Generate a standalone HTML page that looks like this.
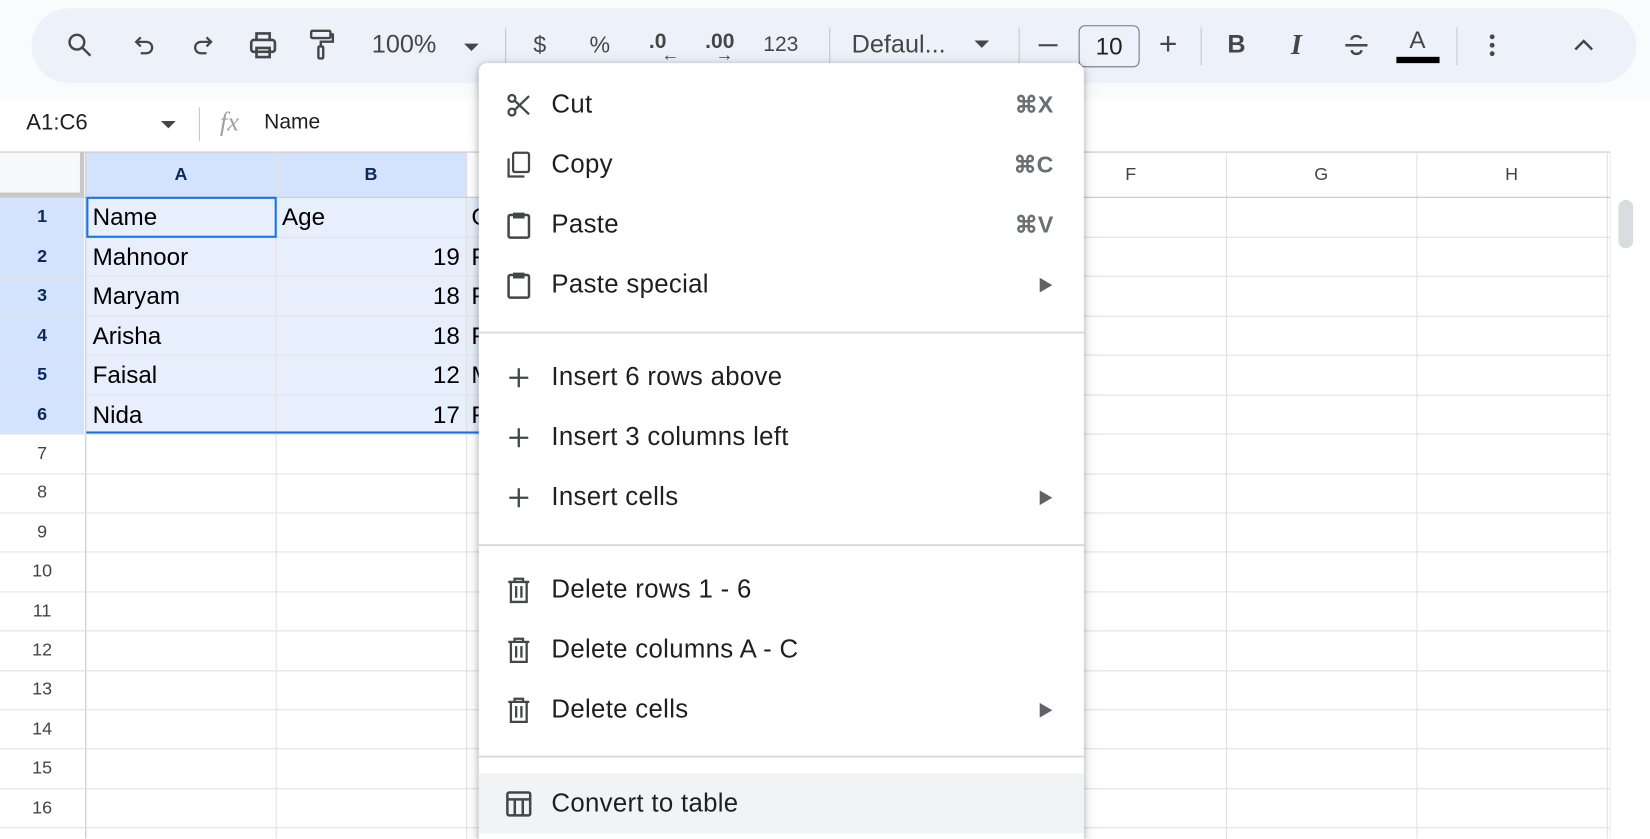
<!DOCTYPE html>
<html><head><meta charset="utf-8">
<style>
*{box-sizing:border-box;margin:0;padding:0}
html,body{width:1650px;height:838px;overflow:hidden;background:#fff}
#wrap{position:absolute;left:0;top:0;width:1568px;height:797px;overflow:hidden;transform:scale(1.05230);transform-origin:0 0;font-family:"Liberation Sans",Arial,sans-serif;color:#1f1f1f;background:#f9fbfd}
.abs{position:absolute}
.pill{left:30px;top:8px;width:1525px;height:71px;background:#edf2fa;border-radius:36px}
.tb{position:absolute;top:43px;transform:translate(-50%,-50%);color:#444746;font-size:22px;white-space:nowrap}
.sep{position:absolute;top:26px;width:1px;height:36px;background:#c4c7c5}
svg{display:block}
.fbar{left:0;top:94px;width:1568px;height:50px;background:#fff}
.grid{left:0;top:144px;width:1530px;height:653px;background:#fff}
.vl{position:absolute;top:144px;width:1px;height:653px;background:#e1e1e1}
.hl{position:absolute;left:0;height:1px;width:1530px;background:#e1e1e1}
.rn{position:absolute;left:0;width:80px;text-align:center;font-size:17px;color:#444;}
.ch{position:absolute;top:145px;height:42px;line-height:42px;text-align:center;font-size:17px;color:#444}
.cell{position:absolute;font-size:23px;color:#000;}
.menu{left:455px;top:60px;width:575px;height:760px;background:#fff;border-radius:8px;box-shadow:0 2px 6px rgba(0,0,0,.25),0 1px 14px rgba(0,0,0,.12)}
.mi{position:absolute;left:0;width:575px;height:50px}
.mi .t{position:absolute;left:69px;top:50%;transform:translateY(-50%);font-size:24.5px;color:#1f1f1f;letter-spacing:.3px}
.mi .ic{position:absolute;left:25px;top:50%;transform:translateY(-50%)}
.mi .k{position:absolute;right:29px;top:50%;transform:translateY(-50%);font-size:22px;color:#6b6f73;font-weight:bold}
.mi .ar{position:absolute;right:30px;top:50%;transform:translateY(-50%);width:0;height:0;border-left:12px solid #5f6368;border-top:7px solid transparent;border-bottom:7px solid transparent}
.msep{position:absolute;left:0;width:575px;height:2px;background:#dadce0}
</style></head><body><div id="wrap">

<div class="abs pill"></div>
<div class="tb" style="left:76px"><svg width="28" height="28" viewBox="0 0 24 24" fill="none" stroke="#444746" stroke-width="2"><circle cx="9.5" cy="9.5" r="6"/><path d="M14 14l6.5 6.5"/></svg></div>
<div class="tb" style="left:137px"><svg width="26" height="26" viewBox="0 0 24 24" fill="none" stroke="#444746" stroke-width="2"><path d="M9 5L5 9l4 4"/><path d="M5 9h9a5 5 0 010 10H9"/></svg></div>
<div class="tb" style="left:193px"><svg width="26" height="26" viewBox="0 0 24 24" fill="none" stroke="#444746" stroke-width="2"><path d="M15 5l4 4-4 4"/><path d="M19 9h-9a5 5 0 000 10h5"/></svg></div>
<div class="tb" style="left:250px"><svg width="30" height="30" viewBox="0 0 24 24" fill="none" stroke="#444746" stroke-width="2"><path d="M7 8V3h10v5"/><rect x="3" y="8" width="18" height="9" rx="2"/><path d="M7 14h10v7H7z"/></svg></div>
<div class="tb" style="left:306px"><svg width="28" height="32" viewBox="0 0 24 28" fill="none" stroke="#444746" stroke-width="2"><rect x="3" y="2" width="16" height="6" rx="1"/><path d="M19 5h2v6h-10v4"/><rect x="9" y="15" width="4" height="10" rx="1"/></svg></div>
<div class="tb" style="left:384px;font-size:24px">100%</div>
<div class="tb" style="left:448px;top:45px;width:0;height:0;border-top:7px solid #444746;border-left:7px solid transparent;border-right:7px solid transparent"></div>
<div class="sep" style="left:480px"></div>
<div class="tb" style="left:513px">$</div>
<div class="tb" style="left:570px">%</div>
<div class="tb" style="left:625px;top:40px;font-size:20px;font-weight:bold">.0<span style="position:absolute;left:12px;top:14px;font-size:17px">←</span></div>
<div class="tb" style="left:684px;top:40px;font-size:20px;font-weight:bold">.00<span style="position:absolute;left:10px;top:14px;font-size:17px">→</span></div>
<div class="tb" style="left:742px;font-size:20px">123</div>
<div class="sep" style="left:788px"></div>
<div class="tb" style="left:854px;font-size:24px">Defaul...</div>
<div class="tb" style="left:933px;top:42px;width:0;height:0;border-top:7px solid #444746;border-left:7px solid transparent;border-right:7px solid transparent"></div>
<div class="sep" style="left:968px"></div>
<div class="tb" style="left:996px;width:18px;height:2px;background:#444746"></div>
<div class="abs" style="left:1025px;top:24px;width:58px;height:40px;border:1.5px solid #747775;border-radius:6px;font-size:23px;text-align:center;line-height:38px;color:#1f1f1f">10</div>
<div class="tb" style="left:1110px;font-size:30px;font-weight:300">+</div>
<div class="sep" style="left:1141px"></div>
<div class="tb" style="left:1175px;font-weight:bold;font-size:24px">B</div>
<div class="tb" style="left:1232px;font-style:italic;font-family:'Liberation Serif',serif;font-size:27px;font-weight:bold">I</div>
<div class="tb" style="left:1289px"><svg width="28" height="28" viewBox="0 0 24 24" fill="none" stroke="#444746" stroke-width="2"><path d="M3 12h18"/><path d="M16 6.5c-1-1.5-2.5-2-4-2-2 0-4 1-4 3"/><path d="M8 16c.5 2 2 3 4 3s4-1 4-3"/></svg></div>
<div class="tb" style="left:1347px;top:38px;font-size:23px">A</div>
<div class="abs" style="left:1327px;top:54px;width:41px;height:6px;background:#000"></div>
<div class="sep" style="left:1384px"></div>
<div class="tb" style="left:1418px"><svg width="8" height="24" viewBox="0 0 8 24" fill="#444746"><circle cx="4" cy="4" r="2.3"/><circle cx="4" cy="12" r="2.3"/><circle cx="4" cy="20" r="2.3"/></svg></div>
<div class="tb" style="left:1505px"><svg width="22" height="14" viewBox="0 0 22 14" fill="none" stroke="#444746" stroke-width="2.4"><path d="M3 11l8-8 8 8"/></svg></div>

<div class="abs fbar"></div>
<div class="abs" style="left:25px;top:105px;font-size:21px;color:#1f1f1f">A1:C6</div>
<div class="abs" style="left:153px;top:115px;width:0;height:0;border-top:7px solid #444746;border-left:7px solid transparent;border-right:7px solid transparent"></div>
<div class="abs" style="left:189px;top:102px;width:1px;height:32px;background:#c4c7c5"></div>
<div class="abs" style="left:209px;top:103px;font-family:'Liberation Serif',serif;font-style:italic;font-size:25px;color:#a0a0a0">fx</div>
<div class="abs" style="left:251px;top:105px;font-size:20px;color:#1f1f1f">Name</div>

<div class="abs grid"></div>
<div class="abs" style="left:82px;top:145px;width:362px;height:42px;background:#d3e3fd"></div>
<div class="abs" style="left:0;top:188px;width:80px;height:224px;background:#d3e3fd"></div>
<div class="abs" style="left:82px;top:188px;width:450px;height:224px;background:#e8effc"></div>
<div class="abs" style="left:0;top:144px;width:1530px;height:1px;background:#c4c7c5"></div>
<div class="abs" style="left:0;top:145px;width:80px;height:42px;background:#f8f9fa;border-right:4px solid #c7c7c7;border-bottom:4px solid #c7c7c7"></div>

<div class="vl" style="left:81px;background:#c4c7c5"></div>
<div class="vl" style="left:262px"></div>
<div class="vl" style="left:443px"></div>
<div class="vl" style="left:984px"></div>
<div class="vl" style="left:1165px"></div>
<div class="vl" style="left:1346px"></div>
<div class="vl" style="left:1527px"></div>
<div class="vl" style="left:1530px;background:#eee"></div>

<div class="hl" style="top:187px;background:#c4c7c5"></div>
<div class="hl" style="top:225px"></div><div class="hl" style="top:262px"></div><div class="hl" style="top:300px"></div>
<div class="hl" style="top:337px"></div><div class="hl" style="top:375px"></div><div class="hl" style="top:412px"></div>
<div class="hl" style="top:450px"></div><div class="hl" style="top:487px"></div><div class="hl" style="top:524px"></div>
<div class="hl" style="top:562px"></div><div class="hl" style="top:599px"></div><div class="hl" style="top:637px"></div>
<div class="hl" style="top:674px"></div><div class="hl" style="top:711px"></div><div class="hl" style="top:749px"></div>
<div class="hl" style="top:786px"></div>

<div class="ch" style="left:82px;width:180px;color:#0b2a5a;font-weight:bold">A</div>
<div class="ch" style="left:262px;width:181px;color:#0b2a5a;font-weight:bold">B</div>
<div class="ch" style="left:984px;width:181px">F</div>
<div class="ch" style="left:1165px;width:181px">G</div>
<div class="ch" style="left:1346px;width:181px">H</div>

<div class="rn" style="top:196px;font-weight:bold;color:#0b2a5a">1</div>
<div class="rn" style="top:234px;font-weight:bold;color:#0b2a5a">2</div>
<div class="rn" style="top:271px;font-weight:bold;color:#0b2a5a">3</div>
<div class="rn" style="top:309px;font-weight:bold;color:#0b2a5a">4</div>
<div class="rn" style="top:346px;font-weight:bold;color:#0b2a5a">5</div>
<div class="rn" style="top:384px;font-weight:bold;color:#0b2a5a">6</div>
<div class="rn" style="top:421px">7</div><div class="rn" style="top:458px">8</div><div class="rn" style="top:496px">9</div>
<div class="rn" style="top:533px">10</div><div class="rn" style="top:571px">11</div><div class="rn" style="top:608px">12</div>
<div class="rn" style="top:645px">13</div><div class="rn" style="top:683px">14</div><div class="rn" style="top:720px">15</div>
<div class="rn" style="top:758px">16</div>

<div class="cell" style="left:88px;top:193px">Name</div>
<div class="cell" style="left:268px;top:193px">Age</div>
<div class="cell" style="left:448px;top:193px">G</div>
<div class="cell" style="left:88px;top:231px">Mahnoor</div>
<div class="cell" style="left:88px;top:268px">Maryam</div>
<div class="cell" style="left:88px;top:306px">Arisha</div>
<div class="cell" style="left:88px;top:343px">Faisal</div>
<div class="cell" style="left:88px;top:381px">Nida</div>
<div class="cell" style="left:380px;top:231px;width:57px;text-align:right">19</div>
<div class="cell" style="left:380px;top:268px;width:57px;text-align:right">18</div>
<div class="cell" style="left:380px;top:306px;width:57px;text-align:right">18</div>
<div class="cell" style="left:380px;top:343px;width:57px;text-align:right">12</div>
<div class="cell" style="left:380px;top:381px;width:57px;text-align:right">17</div>
<div class="cell" style="left:448px;top:231px">F</div><div class="cell" style="left:448px;top:268px">F</div>
<div class="cell" style="left:448px;top:306px">F</div><div class="cell" style="left:448px;top:343px">M</div>
<div class="cell" style="left:448px;top:381px">F</div>
<div class="abs" style="left:82px;top:187px;width:181px;height:39px;border:2px solid #1a73e8"></div>
<div class="abs" style="left:82px;top:410px;width:380px;height:2px;background:#1a73e8"></div>

<div class="abs" style="left:1531px;top:144px;width:37px;height:653px;background:#fff"></div>
<div class="abs" style="left:1538px;top:190px;width:14px;height:46px;border-radius:7px;background:#dadce0"></div>

<div class="abs menu">
  <div class="mi" style="top:15px"><div class="ic"><svg width="26" height="26" viewBox="0 0 24 24" fill="none" stroke="#444746" stroke-width="2"><circle cx="6" cy="6" r="3"/><circle cx="6" cy="18" r="3"/><path d="M8.5 8L21 20M8.5 16L21 4"/></svg></div><div class="t">Cut</div><div class="k">⌘X</div></div>
  <div class="mi" style="top:72px"><div class="ic"><svg width="26" height="28" viewBox="0 0 24 26" fill="none" stroke="#444746" stroke-width="2"><rect x="7" y="2" width="14" height="17" rx="1.5"/><path d="M3 7v16h14"/></svg></div><div class="t">Copy</div><div class="k">⌘C</div></div>
  <div class="mi" style="top:129px"><div class="ic"><svg width="26" height="28" viewBox="0 0 24 26" fill="none" stroke="#444746" stroke-width="2.2"><rect x="3" y="4" width="18" height="20" rx="1.5"/><path d="M8 3h8v3H8z" fill="#444746"/></svg></div><div class="t">Paste</div><div class="k">⌘V</div></div>
  <div class="mi" style="top:186px"><div class="ic"><svg width="26" height="28" viewBox="0 0 24 26" fill="none" stroke="#444746" stroke-width="2.2"><rect x="3" y="4" width="18" height="20" rx="1.5"/><path d="M8 3h8v3H8z" fill="#444746"/></svg></div><div class="t">Paste special</div><div class="ar"></div></div>
  <div class="msep" style="top:255px"></div>
  <div class="mi" style="top:274px"><div class="ic" style="left:28px"><svg width="20" height="20" viewBox="0 0 20 20" stroke="#444746" stroke-width="2.2"><path d="M10 1v18M1 10h18"/></svg></div><div class="t">Insert 6 rows above</div></div>
  <div class="mi" style="top:331px"><div class="ic" style="left:28px"><svg width="20" height="20" viewBox="0 0 20 20" stroke="#444746" stroke-width="2.2"><path d="M10 1v18M1 10h18"/></svg></div><div class="t">Insert 3 columns left</div></div>
  <div class="mi" style="top:388px"><div class="ic" style="left:28px"><svg width="20" height="20" viewBox="0 0 20 20" stroke="#444746" stroke-width="2.2"><path d="M10 1v18M1 10h18"/></svg></div><div class="t">Insert cells</div><div class="ar"></div></div>
  <div class="msep" style="top:457px"></div>
  <div class="mi" style="top:476px"><div class="ic" style="left:27px"><svg width="22" height="26" viewBox="0 0 22 26" fill="none" stroke="#444746" stroke-width="2.2"><path d="M1 5h20M7 5V2h8v3"/><path d="M3.5 5v19h15V5"/><path d="M8.5 9v11M13.5 9v11"/></svg></div><div class="t">Delete rows 1 - 6</div></div>
  <div class="mi" style="top:533px"><div class="ic" style="left:27px"><svg width="22" height="26" viewBox="0 0 22 26" fill="none" stroke="#444746" stroke-width="2.2"><path d="M1 5h20M7 5V2h8v3"/><path d="M3.5 5v19h15V5"/><path d="M8.5 9v11M13.5 9v11"/></svg></div><div class="t">Delete columns A - C</div></div>
  <div class="mi" style="top:590px"><div class="ic" style="left:27px"><svg width="22" height="26" viewBox="0 0 22 26" fill="none" stroke="#444746" stroke-width="2.2"><path d="M1 5h20M7 5V2h8v3"/><path d="M3.5 5v19h15V5"/><path d="M8.5 9v11M13.5 9v11"/></svg></div><div class="t">Delete cells</div><div class="ar"></div></div>
  <div class="msep" style="top:658px"></div>
  <div class="mi" style="top:675px;height:57px;background:#f1f3f4"><div class="ic"><svg width="26" height="26" viewBox="0 0 24 24" fill="none" stroke="#444746" stroke-width="2.2"><rect x="2" y="2" width="20" height="20" rx="1.5"/><path d="M2 8h20M8.5 8v14M15.5 8v14"/></svg></div><div class="t">Convert to table</div></div>
</div>

</div></body></html>
